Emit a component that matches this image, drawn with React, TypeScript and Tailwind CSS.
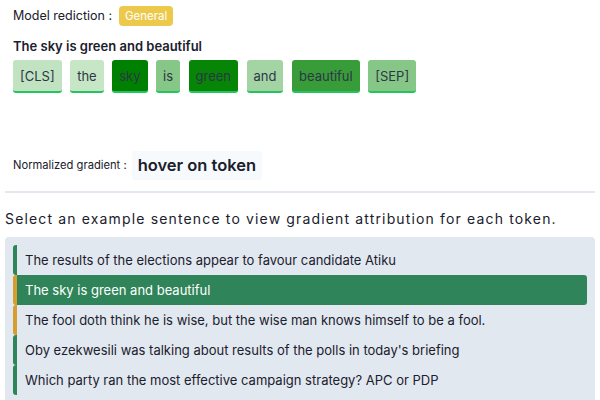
const tokens = [
  { text: "[CLS]", bg: "bg-[#c1e3c1]" },
  { text: "the", bg: "bg-[#c6e6c6]" },
  { text: "sky", bg: "bg-[#008000]" },
  { text: "is", bg: "bg-[#86c686]" },
  { text: "green", bg: "bg-[#068506]" },
  { text: "and", bg: "bg-[#a4d4a4]" },
  { text: "beautiful", bg: "bg-[#389d38]" },
  { text: "[SEP]", bg: "bg-[#86c686]" },
];

const examples = [
  { text: "The results of the elections appear to favour candidate Atiku", accent: "border-[#2f855a]" },
  { text: "The sky is green and beautiful", accent: "border-[#d69e2e]", selected: true },
  { text: "The fool doth think he is wise, but the wise man knows himself to be a fool.", accent: "border-[#d69e2e]" },
  { text: "Oby ezekwesili was talking about results of the polls in today's briefing", accent: "border-[#2f855a]" },
  { text: "Which party ran the most effective campaign strategy? APC or PDP", accent: "border-[#2f855a]" },
];

export default function App() {
  return (
    <div className="h-[400px] w-[600px] overflow-hidden bg-white font-['Inter',sans-serif] text-[#1a202c]">
      <div className="px-[13px] pt-[6px]">
        <div className="flex items-center gap-[7px] text-[12.5px]">
          <span>Model rediction :</span>
          <span className="rounded-[4px] bg-[#ecc94b] px-[6px] py-[2px] text-[11.5px] leading-[16px] text-white">
            General
          </span>
        </div>
        <div className="mt-[10px] text-[13px] font-semibold leading-[20px]">The sky is green and beautiful</div>
        <div className="mt-[4px] flex gap-[8.5px]">
          {tokens.map((t, i) => (
            <span
              key={i}
              className={`${t.bg} rounded-[3px] border-b-2 border-[#22c55e] px-[7px] pb-[5px] pt-[6px] text-[13px] leading-[20px] text-[#2d3748]`}
            >
              {t.text}
            </span>
          ))}
        </div>
        <div className="mt-[58px] flex items-center gap-[5px]">
          <span className="text-[11.2px]">Normalized gradient :</span>
          <span className="rounded-[3px] bg-[#f7fafc] px-[6px] py-[3px] text-[16.5px] font-semibold leading-[23px]">
            hover on token
          </span>
        </div>
      </div>
      <div className="mx-[5px] mt-[11px] h-[2px] bg-[#e2e8f0]" />
      <div className="mt-[16px] px-[5px] text-[14px] leading-[20px] tracking-[1.15px]">
        Select an example sentence to view gradient attribution for each token.
      </div>
      <div className="mx-[5px] mt-[8px] rounded-[4px] bg-[#e2e8f0] py-[8px] pl-[8px] pr-[8px]">
        {examples.map((e, i) => (
          <div
            key={i}
            className={`${e.accent} ${
              e.selected ? "bg-[#2f8559] text-white" : ""
            } rounded-[3px] border-l-4 py-[5px] pl-[8px] text-[13px] leading-[20px]`}
          >
            {e.text}
          </div>
        ))}
      </div>
    </div>
  );
}
